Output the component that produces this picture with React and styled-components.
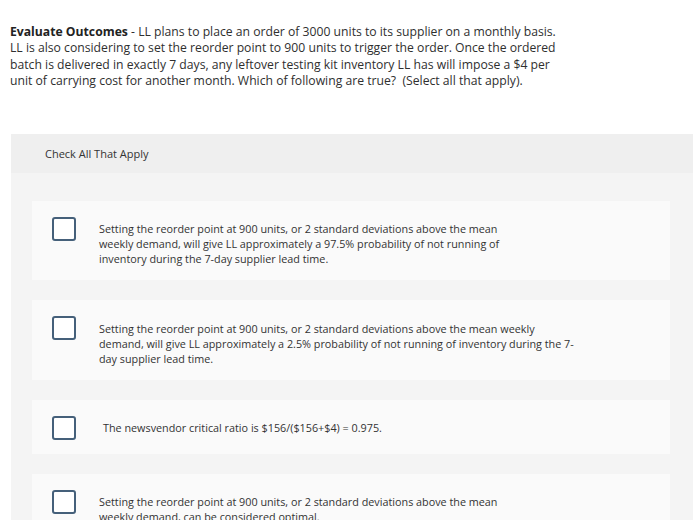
import styled, { createGlobalStyle } from "styled-components";

const GlobalStyle = createGlobalStyle`
  body {
    margin: 0;
    background: #ffffff;
    font-family: "Open Sans", "Lato", sans-serif;
    color: #333333;
  }
`;

const Page = styled.div`
  height: 531px;
  overflow: hidden;
  padding: 24px 0 0 10px;
  box-sizing: border-box;
`;

const Question = styled.p`
  margin: 0;
  width: 600px;
  font-size: 12.2px;
  line-height: 16.4px;
  color: #2f2f2f;

  strong {
    font-weight: 700;
    color: #222;
  }
`;

const Panel = styled.div`
  margin-top: 44px;
  margin-left: 1px;
  width: 682px;
  height: 386px;
  overflow: hidden;
  background: #f4f4f4;
`;

const PanelHeader = styled.div`
  height: 39px;
  display: flex;
  align-items: center;
  padding-left: 34px;
  background: #efefef;
  font-size: 11px;
  color: #333;
`;

const OptionList = styled.div`
  display: flex;
  flex-direction: column;
  gap: 20px;
  padding: 28px 23px 0 21px;
`;

const Option = styled.label`
  display: flex;
  align-items: flex-start;
  gap: 23px;
  padding: 16px 20px 14px;
  background: #fafafa;
`;

const Box = styled.span`
  flex: none;
  width: 24px;
  height: 24px;
  box-sizing: border-box;
  border: 2px solid #45607a;
  border-radius: 3px;
  background: #fff;
`;

const OptionText = styled.span`
  margin-top: 4.5px;
  font-size: 10.8px;
  line-height: 15px;
  color: #333;
  white-space: nowrap;
  padding-left: ${(p) => (p.$indent ? "4px" : "0")};
`;

const options = [
  {
    lines: [
      "Setting the reorder point at 900 units, or 2 standard deviations above the mean",
      "weekly demand, will give LL approximately a 97.5% probability of not running of",
      "inventory during the 7-day supplier lead time.",
    ],
  },
  {
    lines: [
      "Setting the reorder point at 900 units, or 2 standard deviations above the mean weekly",
      "demand, will give LL approximately a 2.5% probability of not running of inventory during  the 7-",
      "day supplier lead time.",
    ],
  },
  {
    indent: true,
    lines: ["The newsvendor critical ratio is $156/($156+$4) = 0.975."],
  },
  {
    lines: [
      "Setting the reorder point at 900 units, or 2 standard deviations above the mean",
      "weekly demand, can be considered optimal.",
    ],
  },
];

const App = () => {
  return (
    <>
      <GlobalStyle />
      <Page>
        <Question>
          <strong>Evaluate Outcomes</strong> - LL plans to place an order of
          3000 units to its supplier on a monthly basis.
          <br />
          LL is also considering to set the reorder point to 900 units to
          trigger the order. Once the ordered
          <br />
          batch is delivered in exactly 7 days, any leftover testing kit
          inventory LL has will impose a $4 per
          <br />
          unit of carrying cost for another month. Which of following are true?
          &nbsp;(Select all that apply).
        </Question>

        <Panel>
          <PanelHeader>Check All That Apply</PanelHeader>
          <OptionList>
            {options.map((opt, i) => (
              <Option key={i}>
                <Box />
                <OptionText $indent={opt.indent}>
                  {opt.lines.map((line, j) => (
                    <span key={j}>
                      {line}
                      {j < opt.lines.length - 1 && <br />}
                    </span>
                  ))}
                </OptionText>
              </Option>
            ))}
          </OptionList>
        </Panel>
      </Page>
    </>
  );
};

export default App;
